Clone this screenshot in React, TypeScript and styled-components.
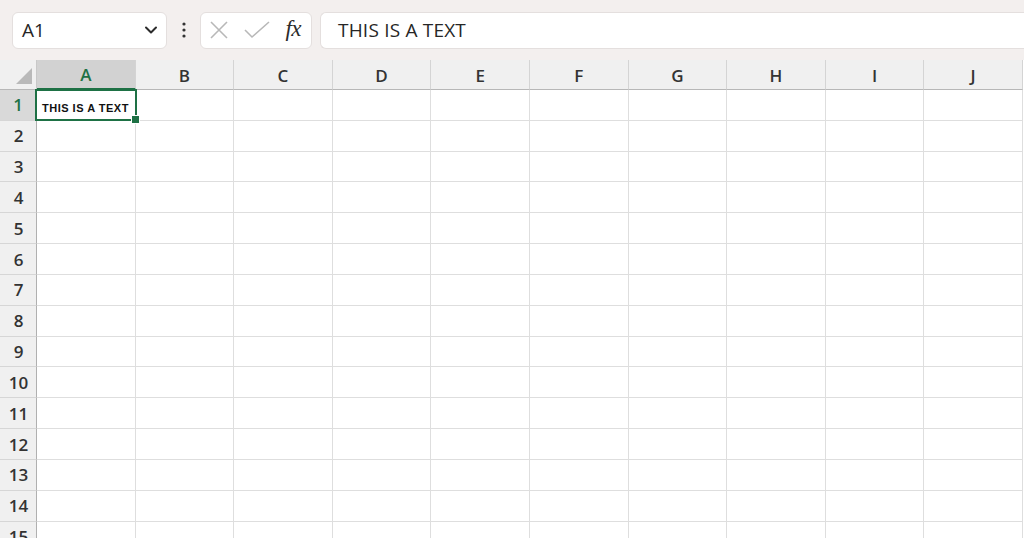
import React from "react";
import styled, { createGlobalStyle } from "styled-components";

const Global = createGlobalStyle`
  html, body { margin: 0; padding: 0; background: #ffffff; overflow: hidden; }
  body { font-family: "Open Sans", "Noto Sans", sans-serif; }
`;

const COLS = ["A", "B", "C", "D", "E", "F", "G", "H", "I", "J"];
const ROWS = Array.from({ length: 15 }, (_, i) => i + 1);
const COL_W = 98.6;
const ROW_H = 30.83;
const HEAD_W = 37;

const Page = styled.div`
  width: 1024px;
  height: 538px;
  overflow: hidden;
  display: flex;
  flex-direction: column;
  background: #ffffff;
`;

const Toolbar = styled.div`
  height: 60px;
  flex: none;
  background: #f3efee;
  display: flex;
  align-items: center;
  padding: 0 0 0 12px;
  box-sizing: border-box;
`;

const Box = styled.div<{ $w?: number; $grow?: boolean }>`
  height: 37px;
  background: #ffffff;
  border: 1px solid #e4dfde;
  border-radius: 6px;
  box-sizing: border-box;
  display: flex;
  align-items: center;
  ${(p) => (p.$w ? `width: ${p.$w}px;` : "")}
  ${(p) => (p.$grow ? "flex: 1; border-right: none; border-radius: 6px 0 0 6px;" : "flex: none;")}
`;

const NameText = styled.span`
  font-size: 19px;
  font-weight: 500;
  color: #262626;
  padding-left: 9px;
  flex: 1;
`;

const Chevron = styled.svg`
  margin-right: 8px;
`;

const Dots = styled.div`
  width: 33px;
  flex: none;
  display: flex;
  justify-content: center;
  align-items: center;
`;

const FxButtons = styled(Box)`
  justify-content: space-between;
  padding: 0 10px 0 8px;
  margin-right: 8px;
`;

const Fx = styled.span`
  font-family: "Liberation Serif", "DejaVu Serif", serif;
  font-style: italic;
  font-size: 23px;
  color: #2b2b2b;
  letter-spacing: -0.5px;
  line-height: 1;
  margin-top: -3px;
`;

const FormulaText = styled.span`
  font-size: 19px;
  font-weight: 500;
  letter-spacing: 0.2px;
  color: #262626;
  padding-left: 17px;
`;

const Grid = styled.div`
  display: grid;
  grid-template-columns: ${HEAD_W}px repeat(10, ${COL_W}px);
  grid-template-rows: 30px repeat(15, ${ROW_H}px);
  flex: none;
  position: relative;
`;

const Corner = styled.div`
  background: #f0f0f0;
  border-right: 1px solid #c8c8c8;
  border-bottom: 1px solid #b7b7b7;
  box-sizing: border-box;
  display: flex;
  align-items: flex-end;
  justify-content: flex-end;
  padding: 0 4px 5px 0;
`;

const ColHead = styled.div<{ $sel?: boolean }>`
  background: ${(p) => (p.$sel ? "#d2d2d2" : "#f0f0f0")};
  border-right: 1px solid #d4d4d4;
  border-bottom: ${(p) => (p.$sel ? "2px solid #1e7145" : "1px solid #b7b7b7")};
  box-sizing: border-box;
  display: flex;
  align-items: center;
  justify-content: center;
  font-size: 17px;
  font-weight: 600;
  color: ${(p) => (p.$sel ? "#1e7145" : "#333333")};
  padding-top: 1px;
`;

const RowHead = styled.div<{ $sel?: boolean }>`
  background: ${(p) => (p.$sel ? "#d9d9d9" : "#f0f0f0")};
  border-right: ${(p) => (p.$sel ? "2px solid #1e7145" : "1px solid #b0b0b0")};
  border-bottom: 1px solid #d6d6d6;
  box-sizing: border-box;
  display: flex;
  align-items: center;
  justify-content: center;
  font-size: 17px;
  font-weight: 600;
  color: ${(p) => (p.$sel ? "#1e7145" : "#333333")};
  padding-left: 1px;
`;

const Cell = styled.div`
  border-right: 1px solid #dedede;
  border-bottom: 1px solid #dedede;
  box-sizing: border-box;
  background: #ffffff;
`;

const ActiveCell = styled.div`
  position: relative;
  border: 2px solid #1e7145;
  box-sizing: border-box;
  margin: -1px -1px 0 -2px;
  display: flex;
  align-items: flex-end;
  padding: 0 0 5px 5px;
  font-family: "Liberation Sans", Arial, sans-serif;
  font-weight: bold;
  font-size: 11px;
  letter-spacing: 0.5px;
  color: #111111;
  z-index: 2;
  background: #ffffff;
  white-space: nowrap;
`;

const Handle = styled.div`
  position: absolute;
  right: -5px;
  bottom: -5px;
  width: 7px;
  height: 7px;
  background: #1e7145;
  border: 1px solid #ffffff;
`;

export default function App() {
  return (
    <Page>
      <Global />
      <Toolbar>
        <Box $w={155}>
          <NameText>A1</NameText>
          <Chevron width="14" height="10" viewBox="0 0 14 10">
            <path d="M2 2.5 L7 7.5 L12 2.5" fill="none" stroke="#2b2b2b" strokeWidth="2" strokeLinecap="round" strokeLinejoin="round" />
          </Chevron>
        </Box>
        <Dots>
          <svg width="4" height="16" viewBox="0 0 4 16">
            <circle cx="2" cy="2" r="1.6" fill="#333" />
            <circle cx="2" cy="8" r="1.6" fill="#333" />
            <circle cx="2" cy="14" r="1.6" fill="#333" />
          </svg>
        </Dots>
        <FxButtons $w={112}>
          <svg width="20" height="20" viewBox="0 0 20 20">
            <path d="M2 2 L18 18 M18 2 L2 18" stroke="#b8b8b8" strokeWidth="1.6" fill="none" />
          </svg>
          <svg width="26" height="20" viewBox="0 0 26 20">
            <path d="M1 10 L8 17 L25 2" stroke="#b8b8b8" strokeWidth="1.6" fill="none" />
          </svg>
          <Fx>fx</Fx>
        </FxButtons>
        <Box $grow>
          <FormulaText>THIS IS A TEXT</FormulaText>
        </Box>
      </Toolbar>
      <Grid>
        <Corner>
          <svg width="16" height="16" viewBox="0 0 16 16">
            <path d="M16 0 L16 16 L0 16 Z" fill="#b9b9b9" />
          </svg>
        </Corner>
        {COLS.map((c, i) => (
          <ColHead key={c} $sel={i === 0}>
            {c}
          </ColHead>
        ))}
        {ROWS.map((r) => (
          <React.Fragment key={r}>
            <RowHead $sel={r === 1}>{r}</RowHead>
            {COLS.map((c) =>
              r === 1 && c === "A" ? (
                <ActiveCell key={c}>
                  THIS IS A TEXT
                  <Handle />
                </ActiveCell>
              ) : (
                <Cell key={c} />
              )
            )}
          </React.Fragment>
        ))}
      </Grid>
    </Page>
  );
}
